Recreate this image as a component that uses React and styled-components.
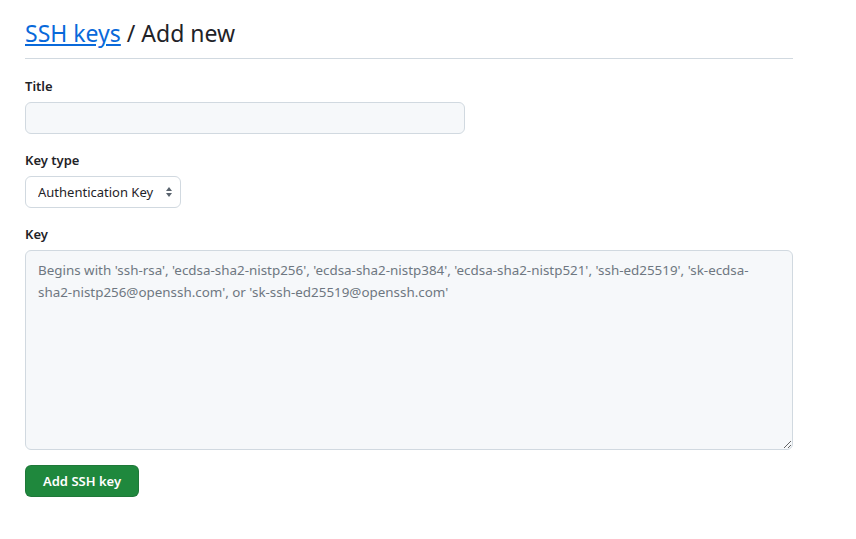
import styled, { createGlobalStyle } from "styled-components";

const GlobalStyle = createGlobalStyle`
  body {
    margin: 0;
    background: #ffffff;
    color: #1f2328;
    font-family: "Noto Sans", "Open Sans", sans-serif;
  }
`;

const Page = styled.div`
  width: 768px;
  padding: 16px 0 0 25px;
`;

const Header = styled.h2`
  margin: 0 0 17px;
  padding-bottom: 8px;
  border-bottom: 1px solid #d1d9e0;
  font-size: 23px;
  font-weight: 400;
  line-height: 34px;
`;

const Crumb = styled.a`
  color: #0969da;
  text-decoration: underline;
  cursor: pointer;
`;

const Form = styled.form`
  display: flex;
  flex-direction: column;
`;

const Group = styled.div`
  display: flex;
  flex-direction: column;
  align-items: flex-start;
  margin-bottom: ${(p) => (p.$last ? "15px" : "16px")};
`;

const Label = styled.label`
  font-size: 13px;
  font-weight: 600;
  line-height: 20px;
  margin-bottom: 6px;
`;

const TextInput = styled.input`
  box-sizing: border-box;
  width: 440px;
  height: 32px;
  padding: 5px 12px;
  font: inherit;
  font-size: 14px;
  background: #f6f8fa;
  border: 1px solid #d1d9e0;
  border-radius: 6px;
  outline: none;
`;

const SelectWrap = styled.div`
  position: relative;
`;

const Select = styled.select`
  box-sizing: border-box;
  height: 32px;
  padding: 0 26px 0 12px;
  font-family: "Noto Sans", "Open Sans", sans-serif;
  font-size: 13px;
  color: #1f2328;
  background: #ffffff;
  border: 1px solid #d1d9e0;
  border-radius: 6px;
  appearance: none;
  outline: none;
`;

const Caret = styled.svg`
  position: absolute;
  right: 8px;
  top: 10px;
  pointer-events: none;
`;

const TextArea = styled.textarea`
  box-sizing: border-box;
  width: 768px;
  height: 200px;
  padding: 8px 12px;
  font-family: "Noto Sans", "Open Sans", sans-serif;
  font-size: 13.4px;
  line-height: 22px;
  color: #1f2328;
  background: #f6f8fa;
  border: 1px solid #d1d9e0;
  border-radius: 6px;
  outline: none;
  resize: vertical;

  &::placeholder {
    color: #6e7781;
  }
`;

const Button = styled.button`
  align-self: flex-start;
  height: 32px;
  padding: 0 17px;
  font-family: "Noto Sans", "Open Sans", sans-serif;
  font-size: 13px;
  font-weight: 600;
  color: #ffffff;
  background: #1f883d;
  border: 1px solid rgba(31, 35, 40, 0.15);
  border-radius: 6px;
  cursor: pointer;
`;

const placeholder =
  "Begins with 'ssh-rsa', 'ecdsa-sha2-nistp256', 'ecdsa-sha2-nistp384', 'ecdsa-sha2-nistp521', 'ssh-ed25519', 'sk-ecdsa-sha2-nistp256@openssh.com', or 'sk-ssh-ed25519@openssh.com'";

const App = () => {
  return (
    <Page>
      <GlobalStyle />
      <Header>
        <Crumb>SSH keys</Crumb> / Add new
      </Header>
      <Form onSubmit={(e) => e.preventDefault()}>
        <Group>
          <Label>Title</Label>
          <TextInput type="text" />
        </Group>
        <Group>
          <Label>Key type</Label>
          <SelectWrap>
            <Select defaultValue="auth">
              <option value="auth">Authentication Key</option>
              <option value="sign">Signing Key</option>
            </Select>
            <Caret width="8" height="12" viewBox="0 0 8 12">
              <path d="M4 1 L7 5 H1 Z" fill="#59636e" />
              <path d="M4 11 L7 7 H1 Z" fill="#59636e" />
            </Caret>
          </SelectWrap>
        </Group>
        <Group $last>
          <Label>Key</Label>
          <TextArea placeholder={placeholder} />
        </Group>
        <Button type="submit">Add SSH key</Button>
      </Form>
    </Page>
  );
};

export default App;
